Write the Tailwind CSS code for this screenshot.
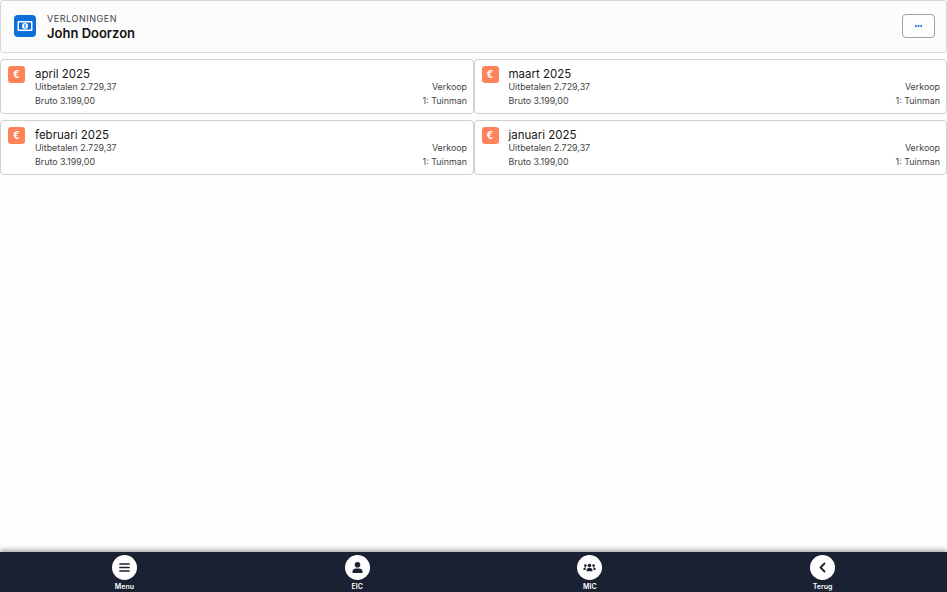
<!DOCTYPE html>
<html lang="nl">
<head>
    <meta charset="UTF-8">
    <meta name="viewport" content="width=device-width, initial-scale=1.0">
    <title>Verloningen</title>
    <script src="https://cdn.jsdelivr.net/npm/@tailwindcss/browser@4"></script>
</head>
<body class="bg-[#fdfdfd] font-['Inter',sans-serif] text-[#181818]">
    <div class="w-[947px] h-[592px] flex flex-col overflow-hidden">
        <!-- Header -->
        <div class="h-[53px] shrink-0 flex items-center justify-between pl-[13px] pr-[11px] pb-[2px] bg-[#fcfcfc] border border-[#d8d8d8] rounded-[3px]">
            <div class="flex items-center gap-[11px]">
                <div class="w-[22px] h-[22px] rounded-[4px] bg-[#0b6fd8] flex items-center justify-center">
                    <svg width="16" height="12" viewBox="0 0 16 12"><rect x="0.5" y="1" width="15" height="10" rx="1" fill="#fff"/><rect x="2" y="2.5" width="12" height="7" fill="#0b6fd8"/><circle cx="8" cy="6" r="3" fill="#fff"/><rect x="7.400" y="4.200" width="1.200" height="3.600" fill="#0b6fd8"/></svg>
                </div>
                <div class="flex flex-col mt-[2px]">
                    <span class="text-[9px] leading-[12px] tracking-[0.55px] text-[#444]">VERLONINGEN</span>
                    <span class="text-[13px] leading-[16px] font-semibold text-[#111]">John Doorzon</span>
                </div>
            </div>
            <button class="w-[33px] h-[24px] rounded-[4px] border border-[#a0a0a0] bg-[#fdfdfd] flex items-center justify-center">
                <svg width="7" height="2" viewBox="0 0 7 2" fill="#1f74d8"><rect x="0" y="0" width="1.600" height="2"/><rect x="2.700" y="0" width="1.600" height="2"/><rect x="5.400" y="0" width="1.600" height="2"/></svg>
            </button>
        </div>

        <!-- Cards -->
        <div class="grid grid-cols-2 gap-y-[6px] mt-[6px]">
            <div class="h-[55px] flex justify-between pl-[7px] pr-[6px] pt-[6px] bg-white border border-[#d0d0d0] rounded-[4px] mr-[-0.5px]">
                <div class="flex gap-[10px]">
                    <div class="w-[17px] h-[17px] rounded-[3px] bg-[#ff8259] text-white text-[10px] font-bold flex items-center justify-center">€</div>
                    <div class="flex flex-col">
                        <span class="text-[11.5px] leading-[16px] mb-[-2px]">april 2025</span>
                        <span class="text-[8.9px] leading-[13px] text-[#444]">Uitbetalen 2.729,37</span>
                        <span class="text-[8.9px] leading-[13px] mt-[1px] text-[#444]">Bruto 3.199,00</span>
                    </div>
                </div>
                <div class="flex flex-col items-end pt-[14px] text-[8.9px] leading-[13px] text-[#444]">
                    <span>Verkoop</span>
                    <span class="mt-[1px]">1: Tuinman</span>
                </div>
            </div>
            <div class="h-[55px] flex justify-between pl-[7px] pr-[6px] pt-[6px] bg-white border border-[#d0d0d0] rounded-[4px]">
                <div class="flex gap-[10px]">
                    <div class="w-[17px] h-[17px] rounded-[3px] bg-[#ff8259] text-white text-[10px] font-bold flex items-center justify-center">€</div>
                    <div class="flex flex-col">
                        <span class="text-[11.5px] leading-[16px] mb-[-2px]">maart 2025</span>
                        <span class="text-[8.9px] leading-[13px] text-[#444]">Uitbetalen 2.729,37</span>
                        <span class="text-[8.9px] leading-[13px] mt-[1px] text-[#444]">Bruto 3.199,00</span>
                    </div>
                </div>
                <div class="flex flex-col items-end pt-[14px] text-[8.9px] leading-[13px] text-[#444]">
                    <span>Verkoop</span>
                    <span class="mt-[1px]">1: Tuinman</span>
                </div>
            </div>
            <div class="h-[55px] flex justify-between pl-[7px] pr-[6px] pt-[6px] bg-white border border-[#d0d0d0] rounded-[4px] mr-[-0.5px]">
                <div class="flex gap-[10px]">
                    <div class="w-[17px] h-[17px] rounded-[3px] bg-[#ff8259] text-white text-[10px] font-bold flex items-center justify-center">€</div>
                    <div class="flex flex-col">
                        <span class="text-[11.5px] leading-[16px] mb-[-2px]">februari 2025</span>
                        <span class="text-[8.9px] leading-[13px] text-[#444]">Uitbetalen 2.729,37</span>
                        <span class="text-[8.9px] leading-[13px] mt-[1px] text-[#444]">Bruto 3.199,00</span>
                    </div>
                </div>
                <div class="flex flex-col items-end pt-[14px] text-[8.9px] leading-[13px] text-[#444]">
                    <span>Verkoop</span>
                    <span class="mt-[1px]">1: Tuinman</span>
                </div>
            </div>
            <div class="h-[55px] flex justify-between pl-[7px] pr-[6px] pt-[6px] bg-white border border-[#d0d0d0] rounded-[4px]">
                <div class="flex gap-[10px]">
                    <div class="w-[17px] h-[17px] rounded-[3px] bg-[#ff8259] text-white text-[10px] font-bold flex items-center justify-center">€</div>
                    <div class="flex flex-col">
                        <span class="text-[11.5px] leading-[16px] mb-[-2px]">januari 2025</span>
                        <span class="text-[8.9px] leading-[13px] text-[#444]">Uitbetalen 2.729,37</span>
                        <span class="text-[8.9px] leading-[13px] mt-[1px] text-[#444]">Bruto 3.199,00</span>
                    </div>
                </div>
                <div class="flex flex-col items-end pt-[14px] text-[8.9px] leading-[13px] text-[#444]">
                    <span>Verkoop</span>
                    <span class="mt-[1px]">1: Tuinman</span>
                </div>
            </div>
        </div>

        <!-- Bottom bar -->
        <div class="mt-auto h-[40px] shrink-0 bg-[#192132] shadow-[0_-2px_5px_rgba(0,0,0,0.35)] grid grid-cols-4 pl-[8px] pr-[8px]">
            <div class="flex flex-col items-center pt-[3px]">
                <div class="w-[25px] h-[25px] rounded-full bg-white flex items-center justify-center">
                    <svg width="13" height="13" viewBox="0 0 13 13" fill="none" stroke="#192132" stroke-width="1.7" stroke-linecap="round"><path d="M2 3h9M2 6.500h9M2 10h9"/></svg>
                </div>
                <span class="text-[7px] leading-[10px] mt-[2px] font-semibold text-white">Menu</span>
            </div>
            <div class="flex flex-col items-center pt-[3px]">
                <div class="w-[25px] h-[25px] rounded-full bg-white flex items-center justify-center">
                    <svg width="13" height="13" viewBox="0 0 13 13" fill="#192132"><circle cx="6.500" cy="3.800" r="2.800"/><path d="M1.500 12v-1.300C1.500 8.800 3 7.600 5 7.600h3c2 0 3.500 1.200 3.500 3.100V12z"/></svg>
                </div>
                <span class="text-[7px] leading-[10px] mt-[2px] font-semibold text-white">EIC</span>
            </div>
            <div class="flex flex-col items-center pt-[3px]">
                <div class="w-[25px] h-[25px] rounded-full bg-white flex items-center justify-center">
                    <svg width="13" height="11" viewBox="0 0 13 11" fill="#192132"><circle cx="6.500" cy="3.600" r="1.800"/><circle cx="2.400" cy="3.600" r="1.300"/><circle cx="10.600" cy="3.600" r="1.300"/><path d="M3.600 9.200V8c0-1.300 1-2 2-2h1.800c1 0 2 .7 2 2v1.200z"/><path d="M.4 8V7.200c0-1 .8-1.600 1.600-1.600h1.200c-.5.5-.7 1.100-.7 1.900V8z"/><path d="M12.600 8V7.200c0-1-.8-1.600-1.600-1.600H9.800c.5.5.7 1.100.7 1.900V8z"/></svg>
                </div>
                <span class="text-[7px] leading-[10px] mt-[2px] font-semibold text-white">MIC</span>
            </div>
            <div class="flex flex-col items-center pt-[3px]">
                <div class="w-[25px] h-[25px] rounded-full bg-white flex items-center justify-center">
                    <svg width="13" height="13" viewBox="0 0 13 13" fill="none" stroke="#192132" stroke-width="1.8" stroke-linecap="round" stroke-linejoin="round"><path d="M8.500 2.500L4.500 6.500l4 4"/></svg>
                </div>
                <span class="text-[7px] leading-[10px] mt-[2px] font-semibold text-white">Terug</span>
            </div>
        </div>
    </div>
</body>
</html>
